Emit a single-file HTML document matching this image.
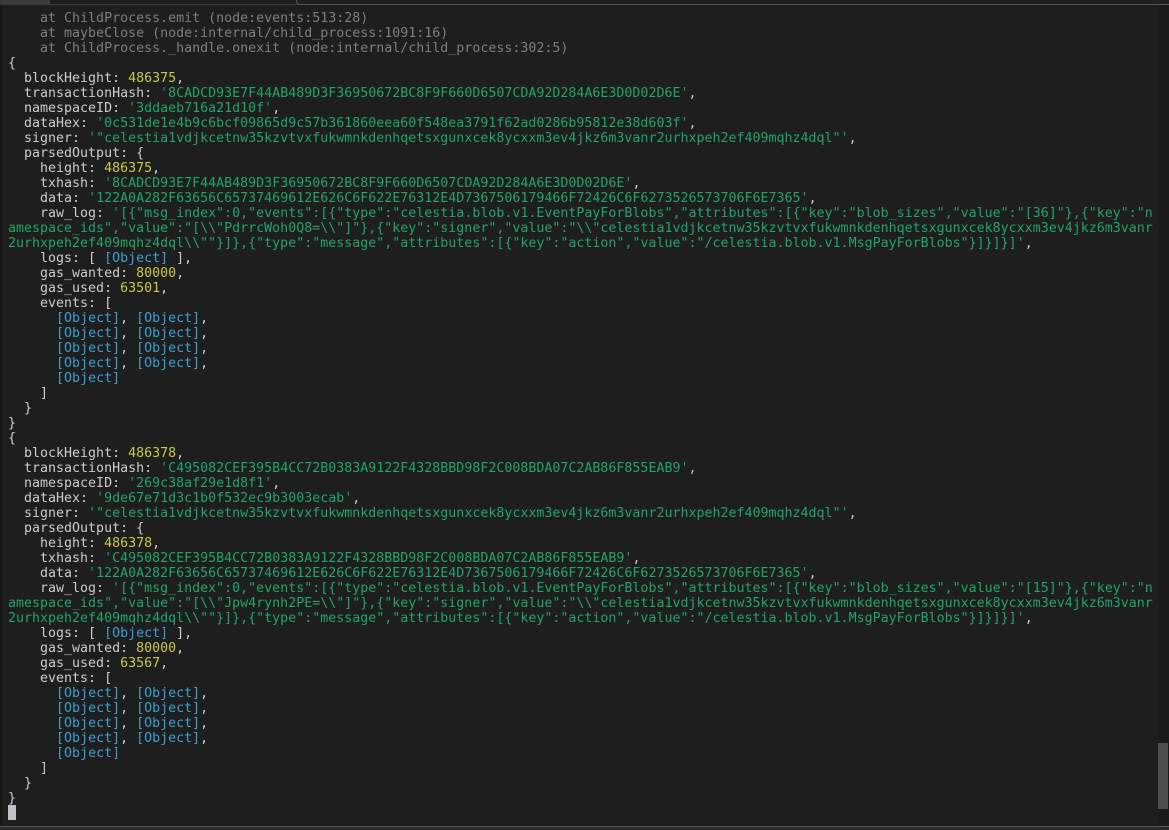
<!DOCTYPE html>
<html><head><meta charset="utf-8"><style>
html,body{margin:0;padding:0;background:#1e1e1e;width:1169px;height:830px;overflow:hidden;position:relative}
.top{position:absolute;left:0;top:0;width:1169px;height:4px;background:#1e1e1e;border-bottom:1px solid #3a3a3a}
.tab{position:absolute;left:0;top:0;width:50px;height:4px;background:#3c3c3c}
.tab2{position:absolute;left:296px;top:0;width:873px;height:4px;border-left:1px solid #555;border-bottom:1px solid #555;border-radius:0 0 0 4px}
.lb{position:absolute;left:0;top:5px;width:3px;height:822px;background:#161616}
pre{position:absolute;left:8px;top:11px;margin:0;font-family:"DejaVu Sans Mono","Liberation Mono",monospace;font-size:13.3px;line-height:15px;color:#cccccc;letter-spacing:0}
.g{color:#7f7f7f}.y{color:#c8c84a}.s{color:#21a56a}.c{color:#3b9fd1}
.sb{position:absolute;left:1158px;top:5px;width:11px;height:820px;background:#1a1a1a}
.th{position:absolute;left:1158px;top:743px;width:10px;height:66px;background:#4e4e4e}
.cur{position:absolute;left:8px;top:805px;width:8px;height:15px;background:#c0c0c8}
.bot{position:absolute;left:0;top:826px;width:1169px;height:4px;background:#2a2a2a;border-top:1px solid #555}
</style></head><body>
<div class="top"></div><div class="tab"></div><div class="tab2"></div>
<div class="lb"></div>
<pre><span class="g">    at ChildProcess.emit (node:events:513:28)
    at maybeClose (node:internal/child_process:1091:16)
    at ChildProcess._handle.onexit (node:internal/child_process:302:5)</span>
{
  blockHeight: <span class="y">486375</span>,
  transactionHash: <span class="s">'8CADCD93E7F44AB489D3F36950672BC8F9F660D6507CDA92D284A6E3D0D02D6E'</span>,
  namespaceID: <span class="s">'3ddaeb716a21d10f'</span>,
  dataHex: <span class="s">'0c531de1e4b9c6bcf09865d9c57b361860eea60f548ea3791f62ad0286b95812e38d603f'</span>,
  signer: <span class="s">'"celestia1vdjkcetnw35kzvtvxfukwmnkdenhqetsxgunxcek8ycxxm3ev4jkz6m3vanr2urhxpeh2ef409mqhz4dql"'</span>,
  parsedOutput: {
    height: <span class="y">486375</span>,
    txhash: <span class="s">'8CADCD93E7F44AB489D3F36950672BC8F9F660D6507CDA92D284A6E3D0D02D6E'</span>,
    data: <span class="s">'122A0A282F63656C65737469612E626C6F622E76312E4D7367506179466F72426C6F6273526573706F6E7365'</span>,
    raw_log: <span class="s">'[{"msg_index":0,"events":[{"type":"celestia.blob.v1.EventPayForBlobs","attributes":[{"key":"blob_sizes","value":"[36]"},{"key":"n
amespace_ids","value":"[\\"PdrrcWoh0Q8=\\"]"},{"key":"signer","value":"\\"celestia1vdjkcetnw35kzvtvxfukwmnkdenhqetsxgunxcek8ycxxm3ev4jkz6m3vanr
2urhxpeh2ef409mqhz4dql\\""}]},{"type":"message","attributes":[{"key":"action","value":"/celestia.blob.v1.MsgPayForBlobs"}]}]}]'</span>,
    logs: [ <span class="c">[Object]</span> ],
    gas_wanted: <span class="y">80000</span>,
    gas_used: <span class="y">63501</span>,
    events: [
      <span class="c">[Object]</span>, <span class="c">[Object]</span>,
      <span class="c">[Object]</span>, <span class="c">[Object]</span>,
      <span class="c">[Object]</span>, <span class="c">[Object]</span>,
      <span class="c">[Object]</span>, <span class="c">[Object]</span>,
      <span class="c">[Object]</span>
    ]
  }
}
{
  blockHeight: <span class="y">486378</span>,
  transactionHash: <span class="s">'C495082CEF395B4CC72B0383A9122F4328BBD98F2C008BDA07C2AB86F855EAB9'</span>,
  namespaceID: <span class="s">'269c38af29e1d8f1'</span>,
  dataHex: <span class="s">'9de67e71d3c1b0f532ec9b3003ecab'</span>,
  signer: <span class="s">'"celestia1vdjkcetnw35kzvtvxfukwmnkdenhqetsxgunxcek8ycxxm3ev4jkz6m3vanr2urhxpeh2ef409mqhz4dql"'</span>,
  parsedOutput: {
    height: <span class="y">486378</span>,
    txhash: <span class="s">'C495082CEF395B4CC72B0383A9122F4328BBD98F2C008BDA07C2AB86F855EAB9'</span>,
    data: <span class="s">'122A0A282F63656C65737469612E626C6F622E76312E4D7367506179466F72426C6F6273526573706F6E7365'</span>,
    raw_log: <span class="s">'[{"msg_index":0,"events":[{"type":"celestia.blob.v1.EventPayForBlobs","attributes":[{"key":"blob_sizes","value":"[15]"},{"key":"n
amespace_ids","value":"[\\"Jpw4rynh2PE=\\"]"},{"key":"signer","value":"\\"celestia1vdjkcetnw35kzvtvxfukwmnkdenhqetsxgunxcek8ycxxm3ev4jkz6m3vanr
2urhxpeh2ef409mqhz4dql\\""}]},{"type":"message","attributes":[{"key":"action","value":"/celestia.blob.v1.MsgPayForBlobs"}]}]}]'</span>,
    logs: [ <span class="c">[Object]</span> ],
    gas_wanted: <span class="y">80000</span>,
    gas_used: <span class="y">63567</span>,
    events: [
      <span class="c">[Object]</span>, <span class="c">[Object]</span>,
      <span class="c">[Object]</span>, <span class="c">[Object]</span>,
      <span class="c">[Object]</span>, <span class="c">[Object]</span>,
      <span class="c">[Object]</span>, <span class="c">[Object]</span>,
      <span class="c">[Object]</span>
    ]
  }
}</pre>
<div class="cur"></div>
<div class="sb"></div><div class="th"></div>
<div class="bot"></div>
</body></html>
